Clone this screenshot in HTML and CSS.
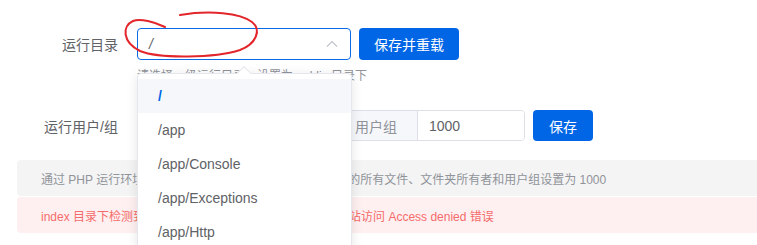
FILE: index.html
```html
<!DOCTYPE html>
<html lang="zh-CN">
<head>
    <meta charset="UTF-8">
    <title>运行目录</title>
    <link rel="stylesheet" href="styles.css">
</head>
<body>
    <div class="site-panel">
        <div class="form-row">
            <div class="form-label">运行目录</div>
            <div class="form-field">
                <div class="select-box">
                    <span class="select-value">/</span>
                    <svg class="select-arrow" width="12" height="8" viewBox="0 0 12 8"><path d="M1 6.5 L6 1.5 L11 6.5" fill="none" stroke="#c0c4cc" stroke-width="1.2"/></svg>
                </div>
                <button class="btn-primary">保存并重载</button>
            </div>
        </div>
        <div class="form-hint">请选择一级运行目录，设置为 public 目录下</div>

        <div class="form-row row-user">
            <div class="form-label">运行用户/组</div>
            <div class="form-field">
                <div class="input-group group-user">
                    <span class="input-prepend">用户</span>
                    <input class="input-inner" value="1000">
                </div>
                <div class="input-group group-owner">
                    <span class="input-prepend">用户组</span>
                    <input class="input-inner" value="1000">
                </div>
                <button class="btn-primary btn-small">保存</button>
            </div>
        </div>

        <div class="alert alert-info">通过 PHP 运行环境，将当前站点根目录及其全部子目录下的所有文件、文件夹所有者和用户组设置为 1000</div>
        <div class="alert alert-error">index 目录下检测到 .user.ini 跨站配置文件，可能会导致网站访问 Access denied 错误</div>

        <div class="dropdown">
            <div class="dropdown-arrow"></div>
            <div class="dropdown-item selected">/</div>
            <div class="dropdown-item">/app</div>
            <div class="dropdown-item">/app/Console</div>
            <div class="dropdown-item">/app/Exceptions</div>
            <div class="dropdown-item">/app/Http</div>
        </div>

        <!-- 标注圈 -->
        <svg class="mark" width="757" height="245" viewBox="0 0 757 245">
            <path d="M165 27 C155 22, 140 18, 133 21 C122 26, 122 42, 140 51 C160 59, 215 58, 240 50 C256 44, 262 30, 252 22 C240 13, 210 10, 180 15" fill="none" stroke="#e3262b" stroke-width="2" stroke-linecap="round"/>
        </svg>
    </div>
</body>
</html>
```

FILE: styles.css
```css
* { margin: 0; padding: 0; box-sizing: border-box; }

body {
    background: #fff;
    font-family: "Liberation Sans", "Noto Sans CJK SC", sans-serif;
    color: #606266;
    overflow: hidden;
}

.site-panel {
    position: relative;
    width: 757px;
    height: 245px;
    padding-top: 28px;
    overflow: hidden;
}

.form-row {
    display: flex;
    align-items: center;
    height: 32px;
}

.form-label {
    width: 137px;
    padding-right: 19px;
    text-align: right;
    font-size: 14px;
    color: #606266;
}

.form-field {
    display: flex;
    align-items: center;
    gap: 8px;
}

.select-box {
    width: 214px;
    height: 32px;
    border: 1px solid #0a6ae6;
    border-radius: 4px;
    display: flex;
    align-items: center;
    justify-content: space-between;
    padding: 0 12px 0 11px;
}

.select-value {
    font-size: 14px;
    color: #606266;
    font-style: italic;
}

.btn-primary {
    height: 32px;
    padding: 0 15px;
    border: none;
    border-radius: 4px;
    background: #0066e6;
    color: #fff;
    font-size: 14px;
    font-family: "Liberation Sans", "Noto Sans CJK SC", sans-serif;
}

.btn-small {
    height: 31px;
    width: 60px;
    padding: 0;
}

.form-hint {
    margin: 8px 0 0 137px;
    font-size: 12px;
    line-height: 16px;
    color: #909399;
}

.row-user {
    margin-top: 26px;
    height: 31px;
}

.input-group {
    display: flex;
    height: 31px;
    border: 1px solid #dcdfe6;
    border-radius: 4px;
    overflow: hidden;
}

.group-user { width: 193px; }
.group-owner { width: 187px; }

.input-prepend {
    display: flex;
    align-items: center;
    padding: 0 20px 0 16px;
    background: #f5f7fa;
    border-right: 1px solid #dcdfe6;
    color: #909399;
    font-size: 14px;
    white-space: nowrap;
}

.input-inner {
    flex: 1;
    min-width: 0;
    border: none;
    outline: none;
    padding: 0 11px;
    font-size: 14px;
    color: #606266;
    font-family: "Liberation Sans", "Noto Sans CJK SC", sans-serif;
}

.alert {
    margin-left: 17px;
    height: 36px;
    display: flex;
    align-items: center;
    padding-left: 24px;
    font-size: 12px;
    white-space: nowrap;
    border-radius: 4px 0 0 4px;
}

.alert-info {
    margin-top: 19px;
    background: #f4f4f5;
    color: #909399;
}

.alert-error {
    margin-top: 1px;
    background: #fef0f0;
    color: #f56c6c;
}

.dropdown {
    position: absolute;
    left: 137px;
    top: 73px;
    width: 215px;
    height: 180px;
    background: #fff;
    border: 1px solid #e4e7ed;
    border-radius: 4px;
    box-shadow: 0 2px 12px rgba(0,0,0,0.1);
    padding: 5px 0;
}

.dropdown-arrow {
    position: absolute;
    top: -6px;
    left: 101px;
    width: 10px;
    height: 10px;
    background: #fff;
    border-left: 1px solid #e4e7ed;
    border-top: 1px solid #e4e7ed;
    transform: rotate(45deg);
}

.dropdown-item {
    height: 34px;
    line-height: 34px;
    padding: 0 20px;
    font-size: 14px;
    color: #606266;
    position: relative;
}

.dropdown-item.selected {
    background: #f5f7fa;
    color: #0066e6;
    font-weight: 700;
}

.mark {
    position: absolute;
    left: 0;
    top: 0;
    pointer-events: none;
}
```
